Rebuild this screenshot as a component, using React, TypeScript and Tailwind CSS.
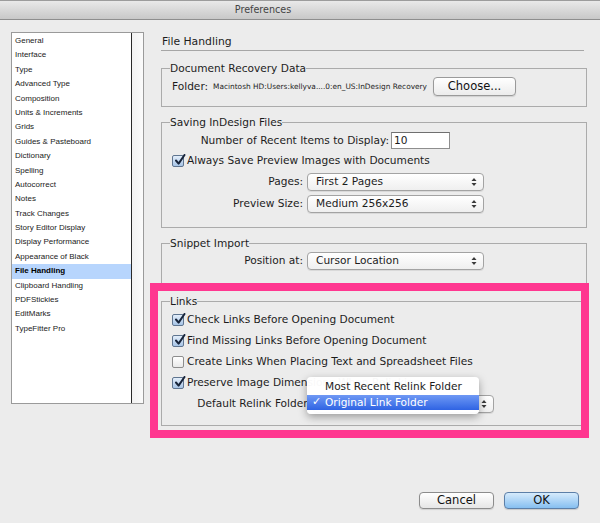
import type { ReactNode } from 'react';

const sections = [
  'General',
  'Interface',
  'Type',
  'Advanced Type',
  'Composition',
  'Units & Increments',
  'Grids',
  'Guides & Pasteboard',
  'Dictionary',
  'Spelling',
  'Autocorrect',
  'Notes',
  'Track Changes',
  'Story Editor Display',
  'Display Performance',
  'Appearance of Black',
  'File Handling',
  'Clipboard Handling',
  'PDFStickies',
  'EditMarks',
  'TypeFitter Pro',
];

function Checkbox({ checked }: { checked: boolean }) {
  return (
    <span
      className={`relative flex h-[12px] w-[12px] shrink-0 items-center justify-center rounded-[2px] border ${
        checked
          ? 'border-[#5f7590] bg-gradient-to-b from-[#e3eefa] to-[#a7c4e6]'
          : 'border-[#8d8d8d] bg-gradient-to-b from-[#ffffff] to-[#e9e9e9]'
      }`}
    >
      {checked && (
        <svg viewBox="0 0 12 12" className="absolute -top-[2px] left-[1px] h-[12px] w-[12px]">
          <path d="M2 6.5 L4.6 9.6 L10.5 1" fill="none" stroke="#17243a" strokeWidth="2" strokeLinecap="round" strokeLinejoin="round" />
        </svg>
      )}
    </span>
  );
}

function Arrows() {
  return (
    <svg viewBox="0 0 6 10" className="h-[10px] w-[6px]">
      <path d="M0.5 4 L3 1 L5.5 4 Z" fill="#3a3a3a" />
      <path d="M0.5 6 L3 9 L5.5 6 Z" fill="#3a3a3a" />
    </svg>
  );
}

function Select({ value, width }: { value: string; width: string }) {
  return (
    <div
      className={`flex h-[18px] ${width} items-center justify-between rounded-[4px] border border-[#a3a3a3] bg-gradient-to-b from-[#ffffff] to-[#efefef] pl-[8px] pr-[6px] shadow-[0_1px_0_rgba(0,0,0,0.08)]`}
    >
      <span>{value}</span>
      <Arrows />
    </div>
  );
}

function Group({ title, className, children }: { title: string; className?: string; children: ReactNode }) {
  return (
    <fieldset className={`w-[426px] border border-[#ababab] px-[8px] ${className ?? ''}`}>
      <legend className="h-[14px] leading-[14px]">{title}</legend>
      {children}
    </fieldset>
  );
}

function CheckRow({ checked, label, className }: { checked: boolean; label: string; className?: string }) {
  return (
    <div className={`ml-[2px] flex h-[16px] items-center gap-[3px] whitespace-nowrap ${className ?? ''}`}>
      <Checkbox checked={checked} />
      <span>{label}</span>
    </div>
  );
}

export default function App() {
  return (
    <div className="relative h-[523px] w-[600px] overflow-hidden bg-[#ececec] font-['DejaVu_Sans',sans-serif] text-[10.6px] text-[#1c1c1c]">
      {/* title bar */}
      <div className="h-px bg-[#9c9c9c]" />
      <div className="flex h-[19px] items-center justify-center border-b border-[#8e8e8e] bg-gradient-to-b from-[#e9e9e9] to-[#c8c8c8] pr-[74px] pt-[1px] text-[9.6px] text-[#444]">
        Preferences
      </div>

      <div className="flex">
        {/* section list */}
        <div className="ml-[11px] mt-[12px] flex h-[372px] w-[133px] border border-[#9a9a9a] bg-white">
          <div className="w-[119px] pt-[1px]">
            {sections.map((s) => (
              <div
                key={s}
                className={`h-[14.4px] pl-[3px] font-['Liberation_Sans',sans-serif] text-[8px] leading-[14.4px] ${
                  s === 'File Handling' ? 'bg-[#b7d5fd] font-bold text-black' : 'text-[#222]'
                }`}
              >
                {s}
              </div>
            ))}
          </div>
          <div className="w-px bg-[#2a2a2a]" />
          <div className="flex-1 bg-gradient-to-r from-[#f2f2f2] to-[#fbfbfb]" />
        </div>

        {/* panel */}
        <div className="ml-[17px] flex flex-col">
          <div className="mt-[14px] h-[17px] w-[423px] border-b border-[#a6a6a6] pl-[1px] text-[10.8px] leading-[16px]">File Handling</div>

          <Group title="Document Recovery Data" className="mt-[10px] pb-[10px]">
            <div className="flex h-[21px] items-center pt-[2px]">
              <span className="ml-[2px] w-[41px]">Folder:</span>
              <span className="w-[220px] whitespace-nowrap text-[7.4px]">Macintosh HD:Users:kellyva....0:en_US:InDesign Recovery</span>
              <button className="h-[19px] w-[83px] rounded-[4px] border border-[#9a9a9a] bg-gradient-to-b from-[#ffffff] to-[#ececec] text-[11.5px] leading-[17px] text-[#111] shadow-[0_1px_1px_rgba(0,0,0,0.12)]">
                Choose...
              </button>
            </div>
          </Group>

          <Group title="Saving InDesign Files" className="mt-[8px] pb-[14px]">
            <div className="mt-[3px] flex h-[17px] items-center">
              <span className="w-[219px] text-right">Number of Recent Items to Display:</span>
              <div className="ml-[2px] h-[17px] w-[59px] border border-[#8e8e8e] border-t-[#6f6f6f] bg-white pl-[2px] leading-[15px]">10</div>
            </div>
            <CheckRow checked label="Always Save Preview Images with Documents" className="mt-[4px]" />
            <div className="mt-[4px] flex h-[18px] items-center">
              <span className="w-[133px] text-right">Pages:</span>
              <div className="ml-[4px]">
                <Select value="First 2 Pages" width="w-[177px]" />
              </div>
            </div>
            <div className="mt-[4px] flex h-[18px] items-center">
              <span className="w-[133px] text-right">Preview Size:</span>
              <div className="ml-[4px]">
                <Select value="Medium 256x256" width="w-[177px]" />
              </div>
            </div>
          </Group>

          <Group title="Snippet Import" className="mt-[8px] pb-[15px]">
            <div className="mt-[2px] flex h-[18px] items-center">
              <span className="w-[133px] text-right">Position at:</span>
              <div className="ml-[4px]">
                <Select value="Cursor Location" width="w-[177px]" />
              </div>
            </div>
          </Group>

          <Group title="Links" className="mt-[8px] pb-[12px]">
            <CheckRow checked label="Check Links Before Opening Document" className="mt-[4px]" />
            <CheckRow checked label="Find Missing Links Before Opening Document" className="mt-[5px]" />
            <CheckRow checked={false} label="Create Links When Placing Text and Spreadsheet Files" className="mt-[5px]" />
            <CheckRow checked label="Preserve Image Dimensions When Relinking" className="mt-[5px]" />
            <div className="mt-[4px] flex h-[18px] items-center">
              <span className="w-[141px] whitespace-nowrap text-right">Default Relink Folder:</span>
              <div className="ml-[2px]">
                <Select value="Original Link Folder" width="w-[181px]" />
              </div>
            </div>
          </Group>

          <div className="mt-[66px] flex w-[426px] justify-end gap-[10px] pr-[8px]">
            <button className="h-[17px] w-[75px] rounded-[4px] border border-[#8c8c8c] bg-gradient-to-b from-[#ffffff] to-[#e6e6e6] text-[11.5px] leading-[15px] text-[#111] shadow-[0_1px_1px_rgba(0,0,0,0.12)]">
              Cancel
            </button>
            <button className="h-[17px] w-[75px] rounded-[4px] border border-[#5c7fa8] bg-gradient-to-b from-[#d6ebfc] to-[#86bff0] text-[11.5px] leading-[15px] text-[#111] shadow-[0_1px_1px_rgba(0,0,0,0.15)]">
              OK
            </button>
          </div>
        </div>
      </div>

      {/* pink highlight box */}
      <div className="absolute left-[150px] top-[283px] h-[155px] w-[439px] border-[8px] border-[#ff3790]" />

      {/* open popup menu */}
      <div className="absolute left-[307px] top-[377px] h-[37px] w-[172px] rounded-[4px] bg-white/[0.97] pt-[1px] shadow-[0_3px_8px_rgba(0,0,0,0.35)]">
        <div className="h-[17px] pl-[18px] leading-[17px]">Most Recent Relink Folder</div>
        <div className="flex h-[15px] items-center bg-gradient-to-b from-[#6f98f4] to-[#2f63e3] text-white">
          <span className="w-[18px] pl-[5px] text-[11px]">✓</span>
          <span>Original Link Folder</span>
        </div>
      </div>
    </div>
  );
}
